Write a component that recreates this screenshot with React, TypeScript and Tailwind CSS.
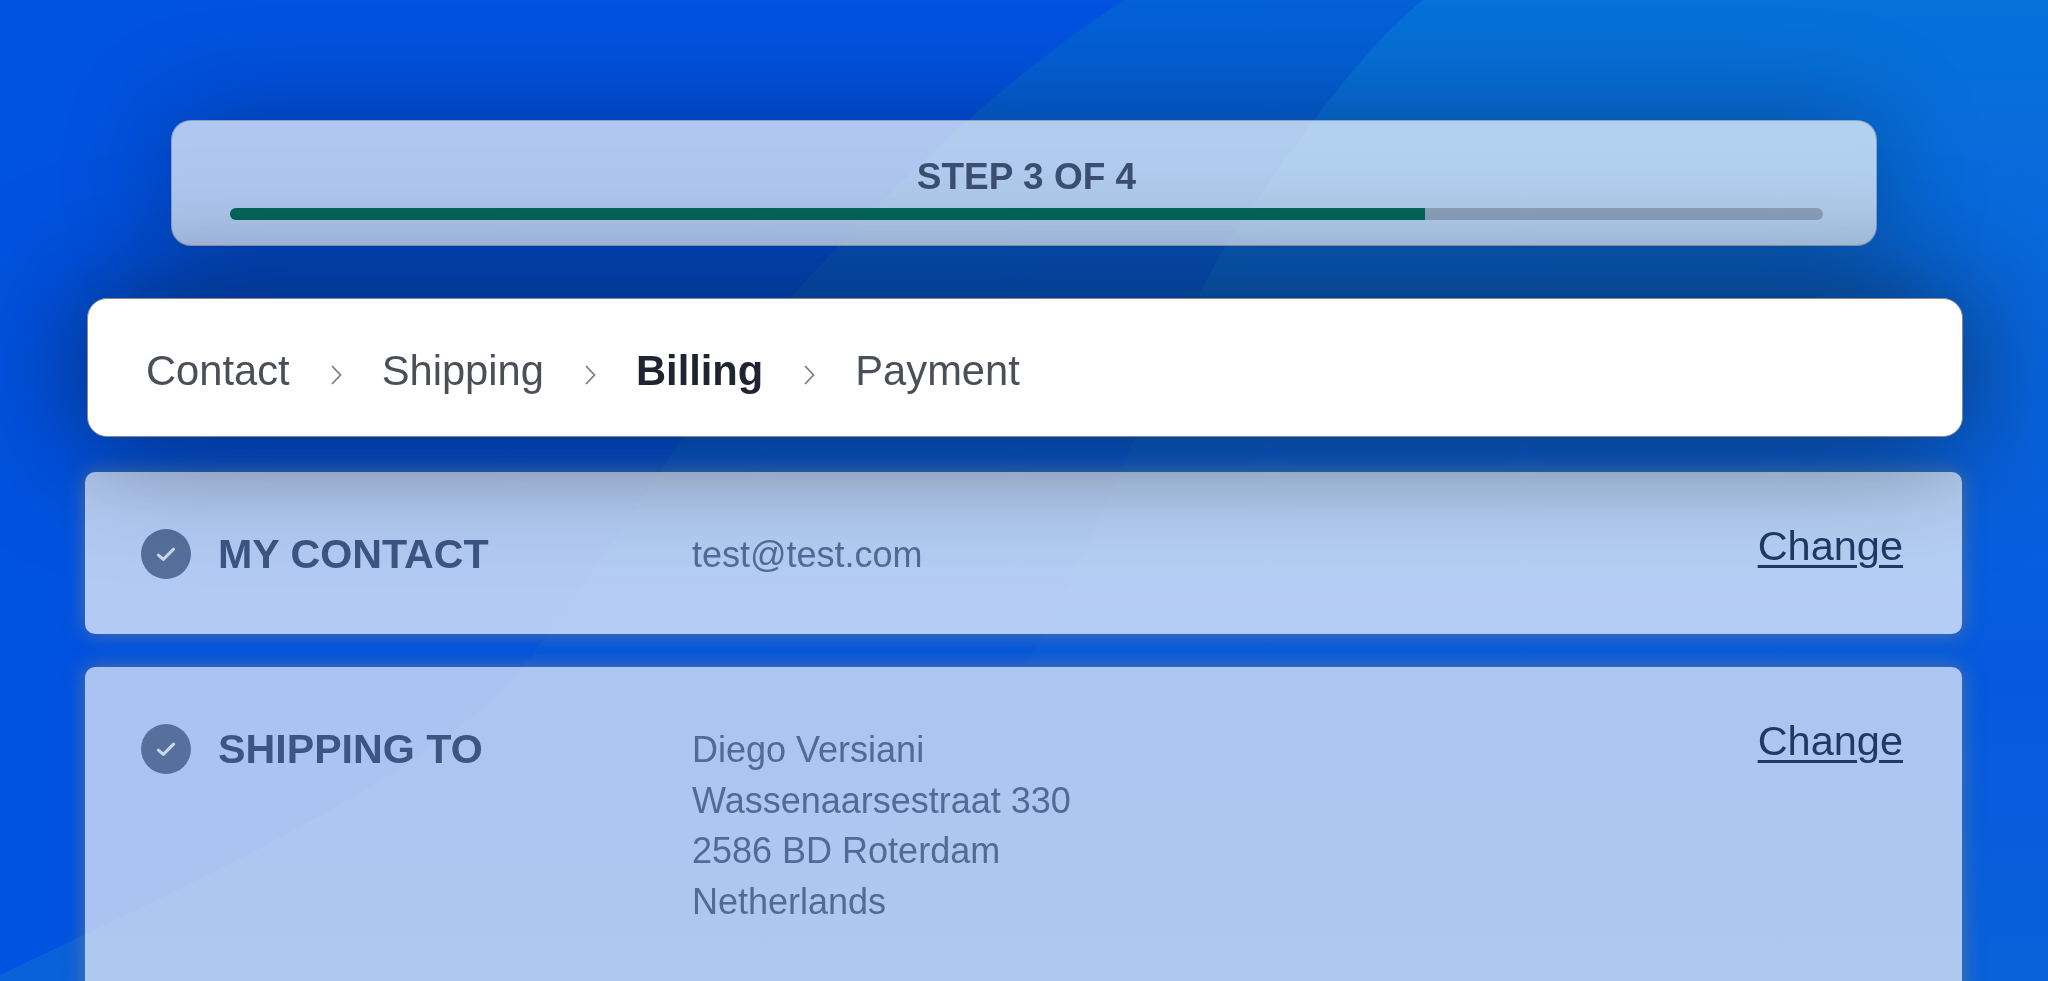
import React from "react";

function Bg() {
  return (
    <svg className="absolute inset-0 h-[981px] w-[2048px]" viewBox="0 0 2048 981" aria-hidden="true">
      <defs>
        <linearGradient id="s1" x1="0" y1="0" x2="0" y2="1">
          <stop offset="0" stopColor="#0a80c0" stopOpacity="0.32" />
          <stop offset="0.7" stopColor="#2a80c8" stopOpacity="0.1" />
          <stop offset="1" stopColor="#2a90c8" stopOpacity="0.25" />
        </linearGradient>
        <linearGradient id="s2" x1="0" y1="0" x2="0" y2="1">
          <stop offset="0" stopColor="#0a90e0" stopOpacity="0.35" />
          <stop offset="0.65" stopColor="#1d8ae8" stopOpacity="0.06" />
          <stop offset="1" stopColor="#1d8ae8" stopOpacity="0" />
        </linearGradient>
      </defs>
      <rect width="2048" height="981" fill="#0052e0" />
      <path d="M1125 0 C1000 78 880 200 790 298 C700 400 640 510 523 667 C440 770 200 880 0 975 L0 981 L2048 981 L2048 0 Z" fill="url(#s1)" />
      <path d="M1423 0 C1360 50 1290 150 1226 245 C1170 340 1110 520 1025 666 C940 800 800 920 700 981 L2048 981 L2048 0 Z" fill="url(#s2)" />
    </svg>
  );
}

function Check() {
  return (
    <div className="flex h-[50px] w-[50px] shrink-0 items-center justify-center rounded-full bg-[#566f9c] blur-[0.6px]">
      <svg width="26" height="26" viewBox="0 0 24 24" fill="none" stroke="#c9d6ec" strokeWidth="2.8" strokeLinecap="round" strokeLinejoin="round">
        <path d="M5 13l4.5 4L19 7.5" />
      </svg>
    </div>
  );
}

function Chevron() {
  return (
    <svg width="12" height="22" viewBox="0 0 12 22" fill="none" stroke="#7b7f87" strokeWidth="1.8" className="mt-2 shrink-0 blur-[0.3px]">
      <path d="M2 2L10.5 11L2 20" />
    </svg>
  );
}

function Row({ title, lines, tall }: { title: string; lines: string[]; tall?: boolean }) {
  return (
    <div
      className={`flex shrink-0 items-start rounded-[10px] pl-14 pr-[59px] pt-14 shadow-[0_0_20px_rgba(115,128,138,0.72)] ${
        tall ? "h-[400px] bg-[#fbfbfb]/[0.68]" : "h-[162px] bg-[#fcfcfc]/[0.71]"
      }`}
    >
      <div className="flex w-[551px] shrink-0 items-center gap-[27px] pt-px">
        <Check />
        <span className="text-[41.2px] font-bold leading-[50px] text-[#3d5583] blur-[0.6px]">{title}</span>
      </div>
      <div className="pt-[2px] text-[36px] leading-[50.5px] text-[#516b97] blur-[0.6px]">
        {lines.map((l) => (
          <div key={l}>{l}</div>
        ))}
      </div>
      <a className="ml-auto -mt-[7px] text-[41.5px] leading-[50px] text-[#1f3a66] underline decoration-[3px] underline-offset-[5px] blur-[0.5px]">
        Change
      </a>
    </div>
  );
}

export default function App() {
  return (
    <div className="relative h-[981px] w-[2048px] overflow-hidden font-['Liberation_Sans',Arial,sans-serif]">
      <Bg />
      <div className="relative flex h-full flex-col pt-[120px]">
        <div className="mx-[171px] h-[126px] shrink-0 rounded-[20px] border border-[#7f90ad]/70 bg-[#fbfbf8]/[0.7] pl-[58px] pr-[53px] pt-[35px] shadow-[0_0_110px_rgba(0,0,0,0.32)]">
          <div className="text-center text-[37px] font-bold leading-[42px] text-[#3c4f72] blur-[0.5px]">STEP 3 OF 4</div>
          <div className="mt-[10px] h-3 overflow-hidden rounded-full bg-[#8ea2bd]">
            <div className="h-full w-3/4 bg-[#046759]" />
          </div>
        </div>
        <div className="relative z-10 ml-[87px] mr-[85px] mt-[52px] flex h-[139px] shrink-0 items-center gap-10 rounded-[20px] border border-[#8a8a8a] bg-white px-[58px] pt-[6px] text-[41.7px] leading-[50px] text-[#4b4f57] shadow-[0_0_125px_rgba(10,8,0,0.62)]">
          <span className="blur-[0.5px]">Contact</span>
          <Chevron />
          <span className="blur-[0.5px]">Shipping</span>
          <Chevron />
          <span className="font-bold text-[#1f2430] blur-[0.5px]">Billing</span>
          <Chevron />
          <span className="blur-[0.5px]">Payment</span>
        </div>
        <div className="ml-[85px] mr-[86px] mt-[35px] flex flex-col gap-[33px]">
          <Row title="MY CONTACT" lines={["test@test.com"]} />
          <Row title="SHIPPING TO" lines={["Diego Versiani", "Wassenaarsestraat 330", "2586 BD Roterdam", "Netherlands"]} tall />
        </div>
      </div>
    </div>
  );
}
